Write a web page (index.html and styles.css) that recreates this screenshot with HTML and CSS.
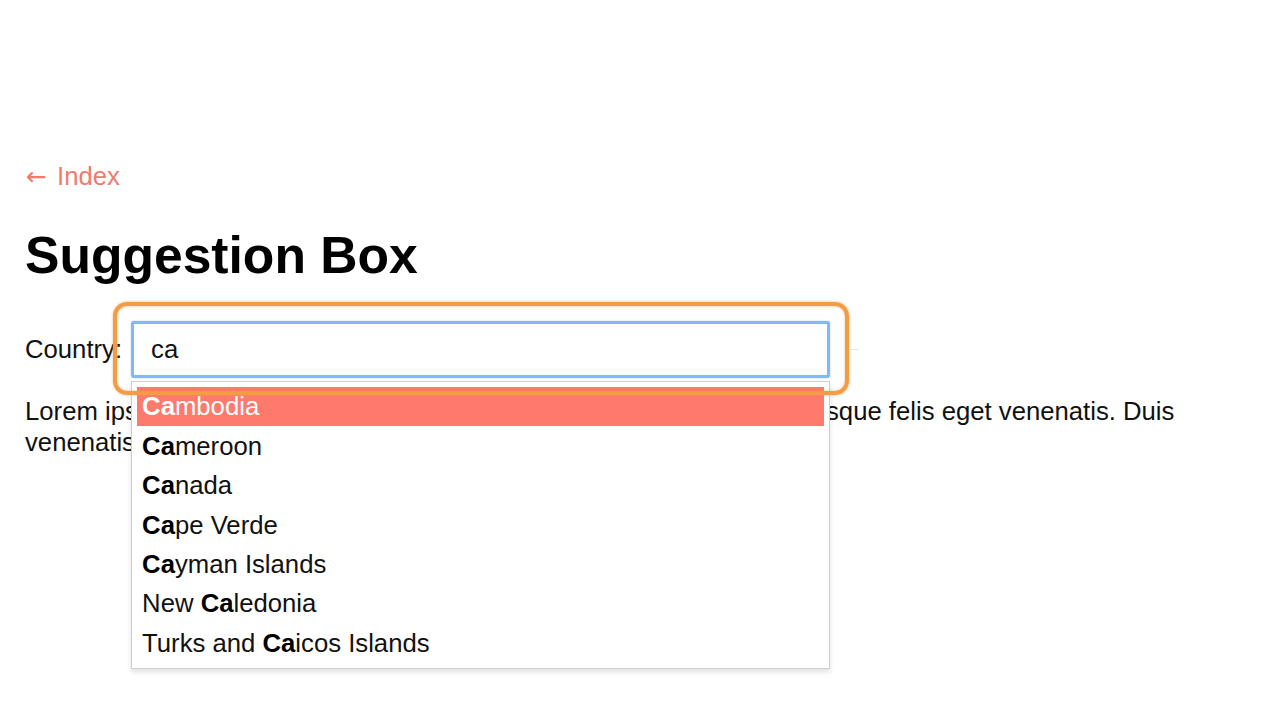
FILE: index.html
```html
<!DOCTYPE html>
<html lang="en">
<head>
  <meta charset="UTF-8" />
  <meta name="viewport" content="width=device-width, initial-scale=1" />
  <title>Suggestion Box</title>
  <link rel="stylesheet" href="styles.css">
</head>
<body>
  <a href="#" class="back-link"><span class="arrow">&larr;</span> Index</a>

  <h1>Suggestion Box</h1>

  <div class="field">
    <label for="country">Country:</label>
    <div class="combo">
      <input id="country" type="text" value="ca" autocomplete="off">
      <ul class="suggestions">
        <li class="active"><b>Ca</b>mbodia</li>
        <li><b>Ca</b>meroon</li>
        <li><b>Ca</b>nada</li>
        <li><b>Ca</b>pe Verde</li>
        <li><b>Ca</b>yman Islands</li>
        <li>New <b>Ca</b>ledonia</li>
        <li>Turks and <b>Ca</b>icos Islands</li>
      </ul>
      <div class="spotlight"></div>
    </div>
  </div>

  <p class="text">Lorem ipsum dolor sit amet, consectetur adipiscing elit. Libero pellentesque felis eget venenatis. Duis venenatis mauris at nisl tempus, sed cursus.</p>
</body>
</html>
```

FILE: styles.css
```css
html {
  height: 100%;
}

body {
  font-family: 'Liberation Sans', Arial, sans-serif;
  font-size: 25.7px;
  line-height: 1.2;
  margin: 0;
  padding: 161px 25px 0;
  min-height: 100%;
  box-sizing: border-box;
  background-color: #fff;
  color: #111;
}

.back-link {
  display: inline-block;
  color: #f07b6d;
  text-decoration: none;
}

.back-link .arrow {
  font-family: 'DejaVu Sans', sans-serif;
  font-size: 25px;
  margin: 0 3px 0 1px;
}

h1 {
  font-size: 51.6px;
  line-height: 1.2;
  font-weight: bold;
  color: #000;
  margin: 33px 0 34px;
}

.field {
  display: flex;
  align-items: center;
  gap: 9px;
}

.combo {
  position: relative;
  width: 699px;
}

.combo input {
  box-sizing: border-box;
  width: 100%;
  height: 57px;
  padding: 0 17px;
  font: inherit;
  color: #111;
  border: 3px solid #86b7ef;
  border-radius: 3px;
  outline: none;
  background: #fff;
  box-shadow: 0 0 2px rgba(120, 175, 240, 0.6), inset 0 0 1px rgba(120, 175, 240, 0.5);
}

.suggestions {
  position: absolute;
  top: 60px;
  left: 0;
  right: 0;
  margin: 0;
  padding: 5px;
  list-style: none;
  background: #fff;
  border: 1px solid #cfcfcf;
  box-shadow: 0 3px 5px rgba(0, 0, 0, 0.12);
  z-index: 2;
}

.suggestions li {
  padding: 4.3px 5px;
  color: #111;
  cursor: pointer;
}

.suggestions li b {
  color: #000;
}

.suggestions li.active {
  background-color: #fe7a6c;
  color: #fff;
}

.suggestions li.active b {
  color: #fff;
}

.spotlight {
  position: absolute;
  left: -18px;
  top: -19px;
  width: 728px;
  height: 85px;
  border: 4px solid #f49b45;
  border-radius: 14px;
  box-shadow: 0 0 3px rgba(244, 155, 69, 0.7), inset 0 0 3px rgba(244, 155, 69, 0.6);
  pointer-events: none;
  z-index: 3;
}

.spotlight::after {
  content: "";
  position: absolute;
  right: -14px;
  top: 43px;
  width: 10px;
  height: 1px;
  background: #e6e6e6;
}

.text {
  margin: 18px 0 0;
}
```
